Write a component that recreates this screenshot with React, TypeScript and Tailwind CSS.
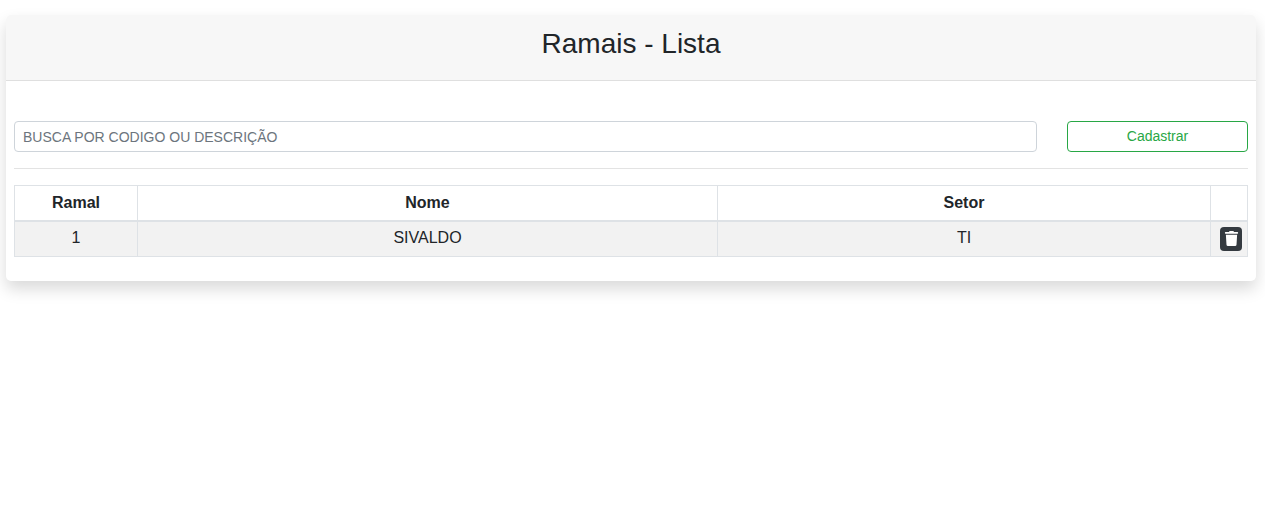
import { FaTrash } from "react-icons/fa";

const ramais = [{ id: 1, ramal: "1", nome: "SIVALDO", setor: "TI" }];

export default function App() {
  return (
    <div className="min-h-[510px] bg-white pt-[15px] pl-[6px] pr-[9px] font-['Liberation_Sans',Arial,sans-serif] text-[#212529]">
      <div className="rounded-[5px] bg-white pb-[24px] shadow-[0_8px_16px_rgba(0,0,0,0.15)]">
        <div className="flex h-[66px] items-start justify-center rounded-t-[5px] border-b border-[#dfdfdf] bg-[#f7f7f7] pt-[12px]">
          <h1 className="text-[28px] leading-[33px] font-normal">Ramais - Lista</h1>
        </div>

        <div className="px-[8px] pt-[40px]">
          <div className="flex items-center justify-between">
            <input
              type="text"
              placeholder="BUSCA POR CODIGO OU DESCRIÇÃO"
              className="h-[31px] w-[1023px] rounded-[4px] border border-[#ced4da] px-[8px] text-[14px] text-[#495057] outline-none placeholder:text-[#6c757d]"
            />
            <button className="h-[31px] w-[181px] rounded-[4px] border border-[#28a745] bg-white text-[14px] text-[#28a745]">
              Cadastrar
            </button>
          </div>

          <hr className="mt-[16px] mb-[16px] border-t border-[#e3e3e3]" />

          <table className="w-[1233px] table-fixed border-collapse text-center text-[16px]">
            <thead>
              <tr className="h-[35px]">
                <th className="w-[123px] border border-b-2 border-[#dee2e6] font-bold">Ramal</th>
                <th className="w-[580px] border border-b-2 border-[#dee2e6] font-bold">Nome</th>
                <th className="w-[493px] border border-b-2 border-[#dee2e6] font-bold">Setor</th>
                <th className="w-[37px] border border-b-2 border-[#dee2e6]"></th>
              </tr>
            </thead>
            <tbody>
              {ramais.map((r) => (
                <tr key={r.id} className="h-[36px] bg-[#f2f2f2]">
                  <td className="border border-[#dee2e6] pb-[2px]">{r.ramal}</td>
                  <td className="border border-[#dee2e6] pb-[2px]">{r.nome}</td>
                  <td className="border border-[#dee2e6] pb-[2px]">{r.setor}</td>
                  <td className="border border-[#dee2e6] p-0">
                    <button className="ml-[9px] flex h-[24px] w-[22px] items-center justify-center rounded-[4px] bg-[#343a40] text-white">
                      <FaTrash className="text-[15px]" />
                    </button>
                  </td>
                </tr>
              ))}
            </tbody>
          </table>
        </div>
      </div>
    </div>
  );
}
